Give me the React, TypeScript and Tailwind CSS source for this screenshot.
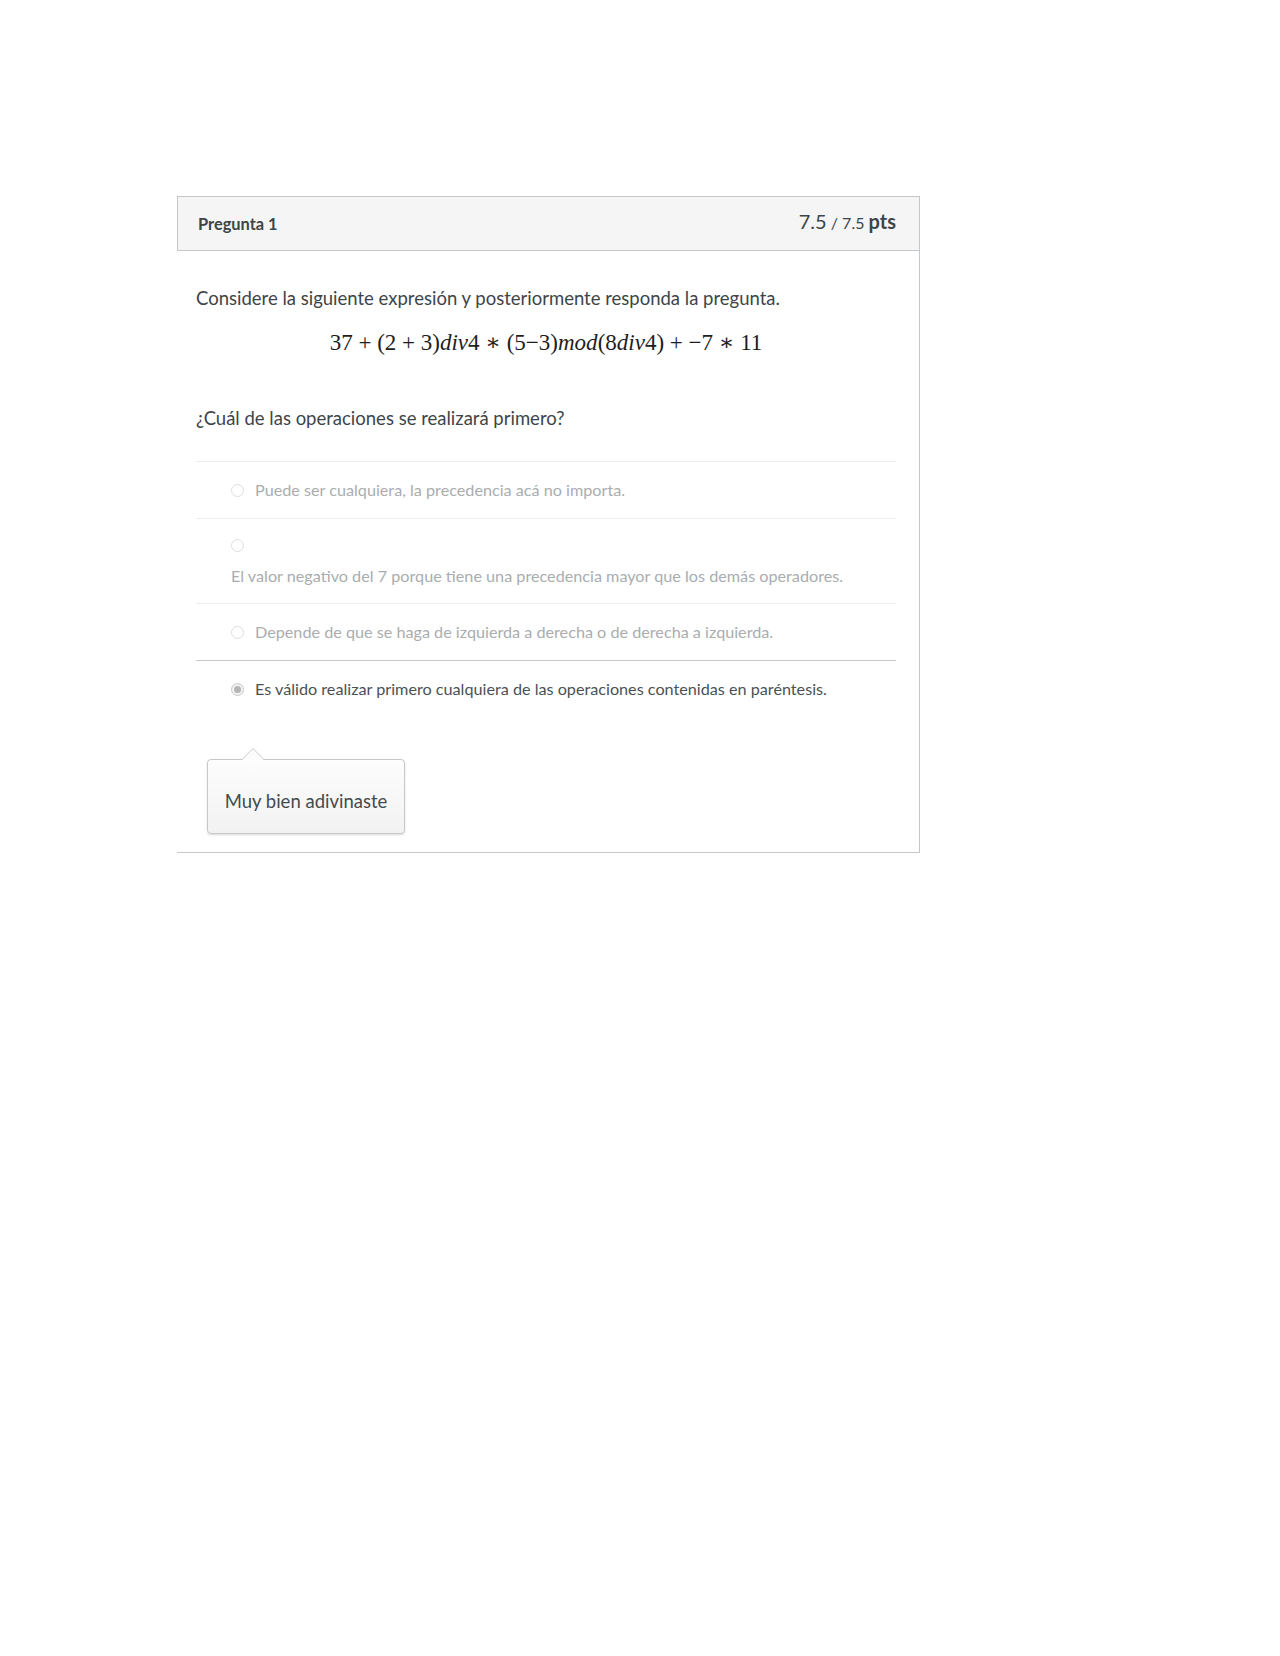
import React from "react";

const answers = [
  { id: "a1", text: "Puede ser cualquiera, la precedencia acá no importa.", stacked: false, selected: false },
  {
    id: "a2",
    text: "El valor negativo del 7 porque tiene una precedencia mayor que los demás operadores.",
    stacked: true,
    selected: false,
  },
  { id: "a3", text: "Depende de que se haga de izquierda a derecha o de derecha a izquierda.", stacked: false, selected: false },
  { id: "a4", text: "Es válido realizar primero cualquiera de las operaciones contenidas en paréntesis.", stacked: false, selected: true },
];

function Radio({ checked }: { checked: boolean }) {
  return (
    <span
      className={`inline-flex h-[13px] w-[13px] shrink-0 items-center justify-center rounded-full border ${
        checked ? "border-[#c9c9c9] bg-[#f1f1f1]" : "border-[#dedede] bg-white"
      }`}
    >
      {checked ? <span className="h-[7px] w-[7px] rounded-full bg-[#b5b5b5]" /> : null}
    </span>
  );
}

export default function App() {
  return (
    <div className="min-h-[1656px] bg-white pl-[177px] pt-[196px] font-['Lato','Noto_Sans',sans-serif]">
      <div className="w-[743px]">
        <div className="flex h-[55px] items-start justify-between border border-[#c4c8cb] bg-[#f5f5f5] pl-[20px] pr-[23px]">
          <span className="mt-[15px] text-[16.4px] font-bold text-[#3d4548]">Pregunta 1</span>
          <span className="mt-[9px] text-[#3d4548]">
            <span className="text-[20px]">7.5</span>
            <span className="text-[16px]"> / 7.5 </span>
            <span className="text-[20px] font-bold">pts</span>
          </span>
        </div>

        <div className="border-r border-b border-[#c4c8cb] pl-[19px] pr-[23px] pb-[18px]">
          <p className="pt-[34px] text-[18.5px] leading-[26px] text-[#3d4548]">
            Considere la siguiente expresión y posteriormente responda la pregunta.
          </p>
          <p className="mt-[17px] text-center font-['Liberation_Serif','DejaVu_Serif',serif] text-[23px] leading-[30px] text-[#1e1e1e]">
            37 + (2 + 3)<i>div</i>4 ∗ (5−3)<i>mod</i>(8<i>div</i>4) + −7 ∗ 11
          </p>
          <p className="mt-[47px] text-[18.5px] leading-[26px] text-[#3d4548]">
            ¿Cuál de las operaciones se realizará primero?
          </p>

          <div className="mt-[30px]">
            {answers.map((a, i) => (
              <div
                key={a.id}
                className={`border-t ${i === 3 ? "border-[#c9c9c9]" : "border-[#eeeeee]"} ${
                  a.stacked ? "pt-[15px] pb-[17px]" : "flex h-[57px] items-center"
                } pl-[35px]`}
              >
                {a.stacked ? (
                  <>
                    <Radio checked={a.selected} />
                    <div className="mt-[8px] text-[16.2px] leading-[20px] text-[#a9adb0]">{a.text}</div>
                  </>
                ) : (
                  <>
                    <Radio checked={a.selected} />
                    <span
                      className={`ml-[11px] text-[16.2px] leading-[20px] ${
                        a.selected ? "text-[#4a5255]" : "text-[#a9adb0]"
                      }`}
                    >
                      {a.text}
                    </span>
                  </>
                )}
              </div>
            ))}
          </div>

          <div className="relative ml-[11px] mt-[42px] w-[198px]">
            <svg
              className="absolute left-[35px] top-[-11px]"
              width="22"
              height="12"
              viewBox="0 0 22 12"
            >
              <path d="M0 11.5 L11 0.5 L22 11.5" fill="#fcfcfc" stroke="#c8c8c8" strokeWidth="1" />
            </svg>
            <div className="flex h-[75px] items-center justify-center rounded-[4px] border border-[#c8c8c8] bg-gradient-to-b from-[#fdfdfd] to-[#f2f2f2] pt-[10px] text-[18.5px] text-[#444b4e] shadow-[0_1px_2px_rgba(0,0,0,0.15)]">
              Muy bien adivinaste
            </div>
            <div className="absolute left-[36px] top-[0px] h-[2px] w-[20px] bg-[#fdfdfd]" />
          </div>
        </div>
      </div>
    </div>
  );
}
